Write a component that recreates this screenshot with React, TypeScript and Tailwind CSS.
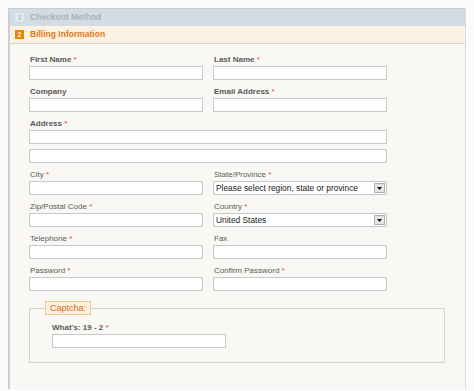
import React from "react";

const Star = () => <span className="text-[#e8461c] font-normal"> *</span>;

function Field({
  label,
  req,
  bold,
  wide,
  children,
}: {
  label: string;
  req?: boolean;
  bold?: boolean;
  wide?: boolean;
  children?: React.ReactNode;
}) {
  return (
    <div className={wide ? "col-span-2 flex flex-col" : "flex flex-col"}>
      <div
        className={
          "h-[12px] leading-[12px] text-[8px] text-[#5a5a5a] pl-[1px] " +
          (bold ? "font-bold" : "")
        }
      >
        {label}
        {req && <Star />}
      </div>
      {children ?? <Input />}
    </div>
  );
}

function Input({ w }: { w?: string }) {
  return (
    <input
      className={
        "block h-[14px] border border-[#c8c8c8] bg-white outline-none " +
        (w ?? "w-full")
      }
    />
  );
}

function Select({ text }: { text: string }) {
  return (
    <div className="flex h-[14px] w-full items-center justify-between border border-[#c8c8c8] bg-white pl-[2px] pr-[1px]">
      <span className="text-[8.4px] leading-none text-[#222]">{text}</span>
      <span className="flex h-[10px] w-[11px] items-center justify-center border border-[#aeb2b6] bg-[#e2e4e6]">
        <svg width="5" height="3" viewBox="0 0 5 3">
          <path d="M0 0H5L2.5 3Z" fill="#111" />
        </svg>
      </span>
    </div>
  );
}

export default function App() {
  return (
    <div className="min-h-[391px] w-[474px] bg-[#fbfbfb] pt-[8px] font-['Liberation_Sans',Arial,sans-serif]">
      <div className="ml-[8px] w-[458px] border-l-2 border-r border-l-[#cfcfcf] border-r-[#dcdcdc]">
        <div className="flex h-[18px] items-center border-t border-[#c5ced4] bg-[#d3dce2] pl-[5px]">
          <span className="flex h-[9px] w-[9px] items-center justify-center bg-[#e3e8eb] text-[7px] font-bold leading-none text-[#b5c0c7]">
            1
          </span>
          <span className="ml-[6px] text-[8.5px] font-bold leading-none text-[#a9b4bc]">
            Checkout Method
          </span>
        </div>
        <div className="flex h-[18px] items-center border-b border-[#d8d0c0] bg-[#fbf2e3] pl-[5px]">
          <span className="flex h-[9px] w-[9px] items-center justify-center bg-[#f08200] text-[7px] font-bold leading-none text-white">
            2
          </span>
          <span className="ml-[6px] text-[8.5px] font-bold leading-none text-[#e5781c]">
            Billing Information
          </span>
        </div>
        <div className="bg-[#f9f8f5] pl-[19px] pt-[10px] pb-[26px]">
          <div className="grid grid-cols-[174px_174px] gap-x-[10px] gap-y-[6px]">
            <Field label="First Name" req bold />
            <Field label="Last Name" req bold />
            <Field label="Company" bold />
            <Field label="Email Address" req bold />
            <Field label="Address" req bold wide>
              <div className="flex flex-col gap-[5px]">
                <Input />
                <Input />
              </div>
            </Field>
            <Field label="City" req />
            <Field label="State/Province" req>
              <Select text="Please select region, state or province" />
            </Field>
            <Field label="Zip/Postal Code" req />
            <Field label="Country" req>
              <Select text="United States" />
            </Field>
            <Field label="Telephone" req />
            <Field label="Fax" />
            <Field label="Password" req />
            <Field label="Confirm Password" req />
          </div>
          <fieldset className="mt-[10px] w-[416px] border border-[#d6d3cc] pb-[14px]">
            <legend className="ml-[15px] border border-[#f3c98f] bg-[#fbf1de] px-[4px] text-[9px] leading-[12px] text-[#e2682a]">
              Captcha:
            </legend>
            <div className="pl-[22px]">
              <div className="mt-[7px] h-[12px] text-[8px] font-bold leading-[12px] text-[#5a5a5a]">
                What's: 19 - 2<Star />
              </div>
              <Input w="w-[174px]" />
            </div>
          </fieldset>
        </div>
      </div>
    </div>
  );
}
